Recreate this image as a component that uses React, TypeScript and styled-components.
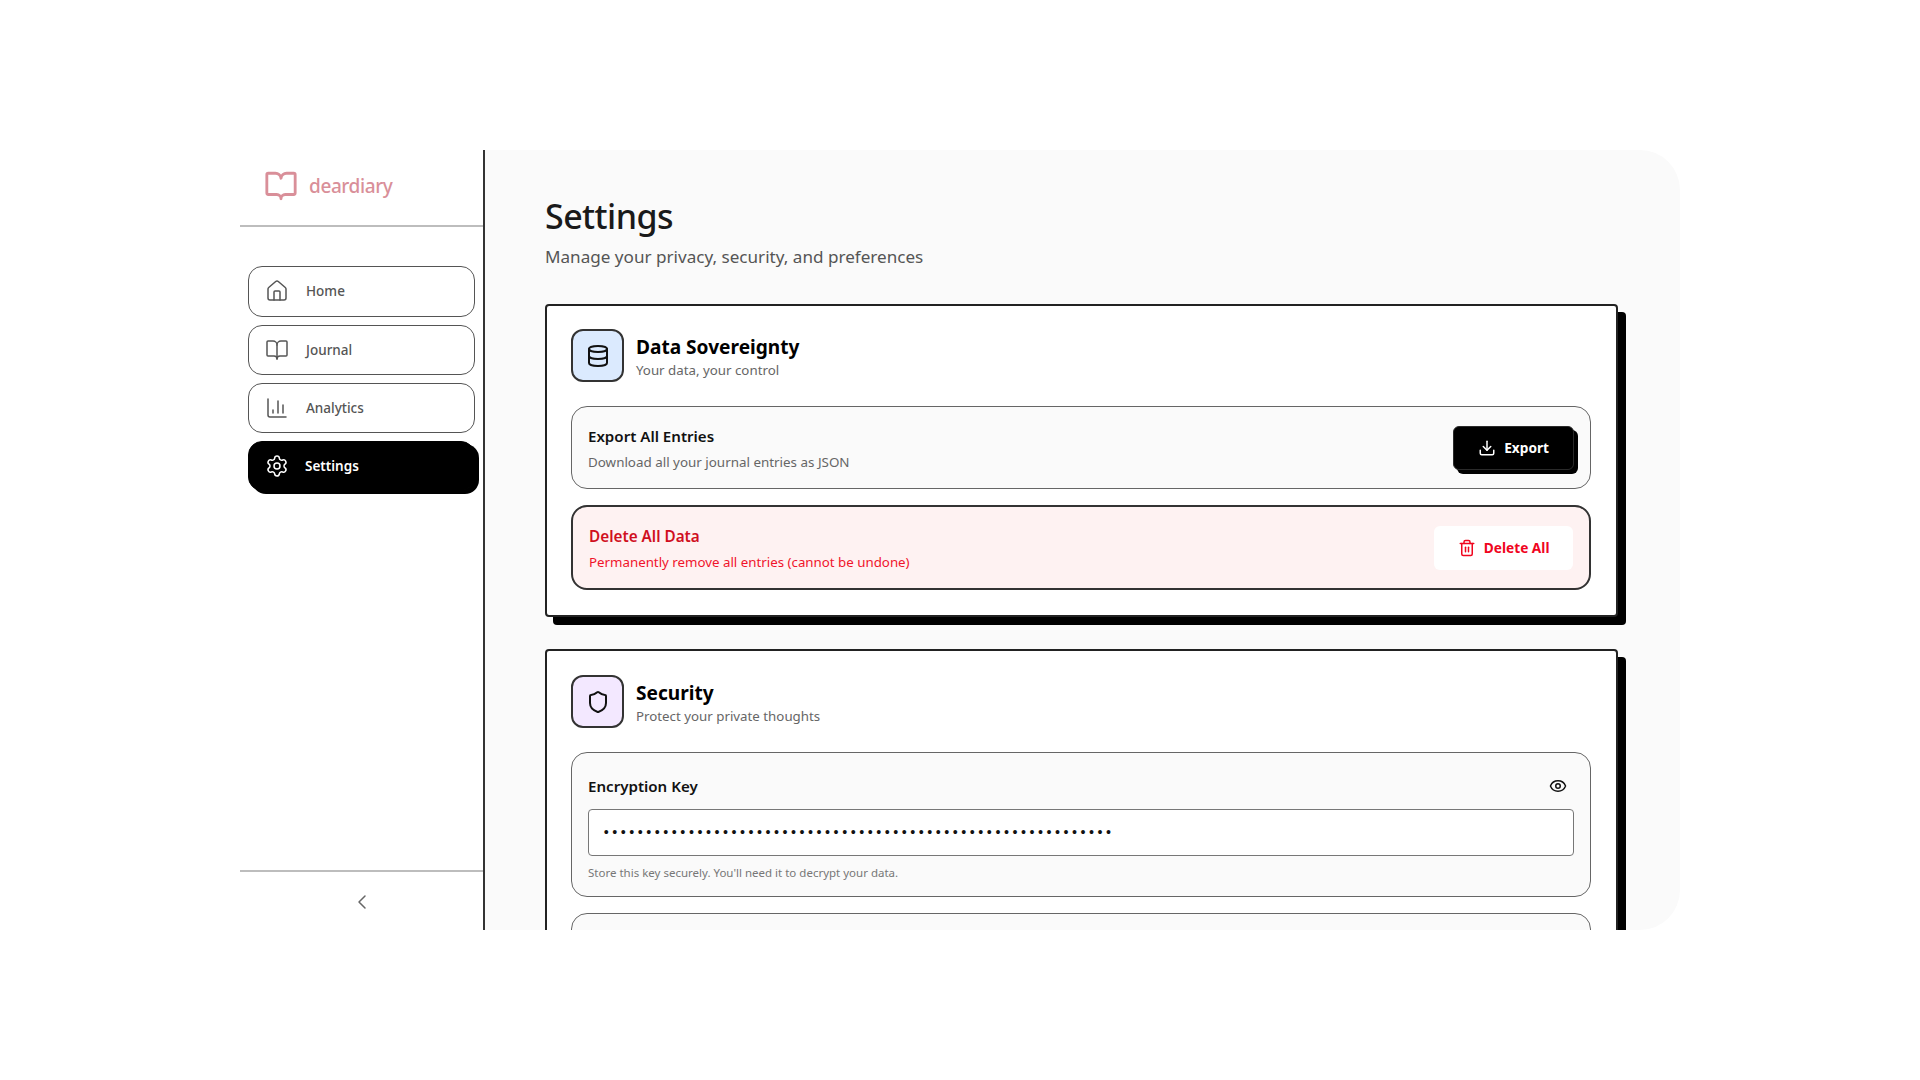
import styled, { createGlobalStyle } from 'styled-components';
import {
    BookOpen,
    ChartColumn,
    ChevronLeft,
    Database,
    Download,
    Eye,
    House,
    Settings as SettingsIcon,
    Shield,
    Trash2,
} from 'lucide-react';

const GlobalStyle = createGlobalStyle`
    * {
        box-sizing: border-box;
    }
    html, body {
        margin: 0;
        height: 100%;
        background: #ffffff;
    }
    body {
        font-family: 'Noto Sans', 'Open Sans', sans-serif;
    }
    #root {
        height: 100%;
    }
`;

const navItems = [
    { label: 'Home', icon: House },
    { label: 'Journal', icon: BookOpen },
    { label: 'Analytics', icon: ChartColumn },
    { label: 'Settings', icon: SettingsIcon, active: true },
];

const App = () => {
    return (
        <Page>
            <GlobalStyle />
            <Frame>
                <Sidebar>
                    <Brand>
                        <svg
                            width='34'
                            height='34'
                            viewBox='0 0 24 24'
                            fill='none'
                            stroke='currentColor'
                            strokeWidth='2'
                            strokeLinejoin='round'
                        >
                            <path d='M3 3h5a4 4 0 0 1 4 3.5A4 4 0 0 1 16 3h5a1 1 0 0 1 1 1v13a1 1 0 0 1-1 1h-6a3 3 0 0 0-3 3 3 3 0 0 0-3-3H3a1 1 0 0 1-1-1V4a1 1 0 0 1 1-1z' />
                        </svg>
                        <BrandName>deardiary</BrandName>
                    </Brand>
                    <Nav>
                        {navItems.map((item) => (
                            <NavItem key={item.label} $active={item.active}>
                                <item.icon size={24} strokeWidth={1.5} />
                                <span>{item.label}</span>
                            </NavItem>
                        ))}
                    </Nav>
                    <Collapse>
                        <ChevronLeft size={24} strokeWidth={1.5} />
                    </Collapse>
                </Sidebar>
                <Main>
                    <Title>Settings</Title>
                    <Subtitle>Manage your privacy, security, and preferences</Subtitle>

                    <Card>
                        <CardHeader>
                            <IconBox $bg='#dbeafe'>
                                <Database size={24} strokeWidth={2} />
                            </IconBox>
                            <HeaderText>
                                <CardTitle>Data Sovereignty</CardTitle>
                                <CardSub>Your data, your control</CardSub>
                            </HeaderText>
                        </CardHeader>
                        <Row>
                            <div>
                                <RowTitle>Export All Entries</RowTitle>
                                <RowSub>Download all your journal entries as JSON</RowSub>
                            </div>
                            <ExportButton>
                                <Download size={18} strokeWidth={2} />
                                Export
                            </ExportButton>
                        </Row>
                        <DangerRow>
                            <div>
                                <DangerTitle>Delete All Data</DangerTitle>
                                <DangerSub>Permanently remove all entries (cannot be undone)</DangerSub>
                            </div>
                            <DeleteButton>
                                <Trash2 size={18} strokeWidth={2} />
                                Delete All
                            </DeleteButton>
                        </DangerRow>
                    </Card>

                    <Card>
                        <CardHeader>
                            <IconBox $bg='#f3e8ff'>
                                <Shield size={24} strokeWidth={2} />
                            </IconBox>
                            <HeaderText>
                                <CardTitle>Security</CardTitle>
                                <CardSub>Protect your private thoughts</CardSub>
                            </HeaderText>
                        </CardHeader>
                        <KeyRow>
                            <KeyHead>
                                <RowTitle>Encryption Key</RowTitle>
                                <EyeButton>
                                    <Eye size={18} strokeWidth={2} />
                                </EyeButton>
                            </KeyHead>
                            <KeyInput type='password' readOnly value={'x'.repeat(60)} />
                            <Hint>Store this key securely. You'll need it to decrypt your data.</Hint>
                        </KeyRow>
                        <Row />
                    </Card>
                </Main>
            </Frame>
        </Page>
    );
};

const Page = styled.div`
    height: 100%;
    display: flex;
    align-items: center;
    justify-content: center;
`;

const Frame = styled.div`
    width: 1440px;
    height: 780px;
    display: flex;
    overflow: hidden;
`;

const Sidebar = styled.aside`
    width: 245px;
    flex-shrink: 0;
    display: flex;
    flex-direction: column;
    border-right: 2px solid #333333;
    background: #ffffff;
`;

const Brand = styled.div`
    height: 77px;
    display: flex;
    align-items: center;
    gap: 11px;
    padding: 0 0 4px 24px;
    border-bottom: 2px solid #bdbdbd;
    color: #d98f99;
    flex-shrink: 0;
`;

const BrandName = styled.span`
    font-size: 19px;
    font-weight: 500;
    letter-spacing: -0.4px;
`;

const Nav = styled.nav`
    flex: 1;
    display: flex;
    flex-direction: column;
    gap: 8px;
    padding: 39.3px 8px 0;
`;

const NavItem = styled.a<{ $active?: boolean }>`
    height: 50.3px;
    display: flex;
    align-items: center;
    gap: ${(p) => (p.$active ? '16px' : '17px')};
    padding-left: 16px;
    border-radius: 14px;
    font-size: 13.5px;
    font-weight: ${(p) => (p.$active ? 600 : 500)};
    border: 1px solid ${(p) => (p.$active ? '#000000' : '#555555')};
    background: ${(p) => (p.$active ? '#000000' : '#ffffff')};
    color: ${(p) => (p.$active ? '#ffffff' : '#555555')};
    box-shadow: ${(p) => (p.$active ? '4px 3px 0 #000000' : 'none')};
`;

const Collapse = styled.div`
    height: 60px;
    flex-shrink: 0;
    display: flex;
    align-items: center;
    justify-content: center;
    padding-top: 2px;
    border-top: 2px solid #bdbdbd;
    color: #666666;
`;

const Main = styled.main`
    flex: 1;
    background: #fafafa;
    border-radius: 0 40px 40px 0;
    padding: 44px 62px 0 60px;
    overflow: hidden;
`;

const Title = styled.h1`
    margin: 0;
    font-size: 34px;
    font-weight: 500;
    line-height: 44px;
    letter-spacing: -0.55px;
    color: #1a1a1a;
`;

const Subtitle = styled.p`
    margin: 6px 0 34px;
    font-size: 17.1px;
    line-height: 26px;
    color: #555555;
`;

const Card = styled.section`
    margin-top: 32px;
    padding: 24px 25px 24px 24px;
    background: #ffffff;
    border: 2px solid #222222;
    border-radius: 4px;
    box-shadow: 8px 8px 0 #000000;
    &:first-of-type {
        padding-top: 23px;
        padding-bottom: 25px;
    }
`;

const CardHeader = styled.div`
    display: flex;
    align-items: center;
    gap: 12px;
    margin-bottom: 24px;
`;

const HeaderText = styled.div`
    padding-top: 2px;
`;

const IconBox = styled.div<{ $bg: string }>`
    width: 53px;
    height: 53px;
    display: flex;
    align-items: center;
    justify-content: center;
    border: 2px solid #333333;
    border-radius: 12px;
    background: ${(p) => p.$bg};
    color: #111111;
`;

const CardTitle = styled.h2`
    margin: 0;
    font-size: 19.1px;
    font-weight: 700;
    line-height: 26px;
    color: #000000;
`;

const CardSub = styled.p`
    margin: 0;
    font-size: 13.3px;
    line-height: 20px;
    color: #666666;
`;

const Row = styled.div`
    min-height: 83px;
    display: flex;
    align-items: center;
    justify-content: space-between;
    padding: 0 16px;
    background: #fafafa;
    border: 1px solid #666666;
    border-radius: 16px;
    margin-bottom: 16px;
`;

const DangerRow = styled(Row)`
    min-height: 85px;
    margin-bottom: 0;
    background: #fef2f2;
    border: 2px solid #333333;
`;

const RowTitle = styled.div`
    font-size: 15.1px;
    font-weight: 600;
    line-height: 24px;
    color: #111111;
`;

const RowSub = styled.div`
    margin-top: 4px;
    font-size: 13.4px;
    line-height: 20px;
    color: #666666;
`;

const DangerTitle = styled(RowTitle)`
    font-size: 15.3px;
    color: #d00f1e;
`;

const DangerSub = styled(RowSub)`
    font-size: 13.3px;
    color: #f0142b;
`;

const ActionButton = styled.button`
    height: 44px;
    display: flex;
    align-items: center;
    gap: 8px;
    padding: 0 24px;
    border: none;
    border-radius: 6px;
    font-family: inherit;
    font-size: 13.7px;
    font-weight: 700;
`;

const ExportButton = styled(ActionButton)`
    background: #000000;
    color: #ffffff;
    box-shadow: 4px 4px 0 #000000;
    border: 1px solid #2a2a2a;
`;

const DeleteButton = styled(ActionButton)`
    padding: 0 23.5px;
    background: #ffffff;
    color: #f0051e;
`;

const KeyRow = styled.div`
    height: 145px;
    padding: 16px;
    background: #fafafa;
    border: 1px solid #666666;
    border-radius: 16px;
    margin-bottom: 16px;
`;

const KeyHead = styled.div`
    display: flex;
    align-items: center;
    justify-content: space-between;
    height: 24px;
    margin-top: 5px;
`;

const EyeButton = styled.span`
    display: flex;
    margin-right: 7px;
    color: #111111;
`;

const KeyInput = styled.input`
    display: block;
    width: 100%;
    height: 47px;
    margin-top: 11px;
    padding: 1px 13px 0;
    background: #ffffff;
    border: 1px solid #777777;
    border-radius: 4px;
    font-family: 'Liberation Mono', monospace;
    font-size: 14.2px;
    color: #111111;
    outline: none;
`;

const Hint = styled.p`
    margin: 8.5px 0 0;
    font-size: 11.5px;
    line-height: 16px;
    color: #777777;
`;

export default App;
